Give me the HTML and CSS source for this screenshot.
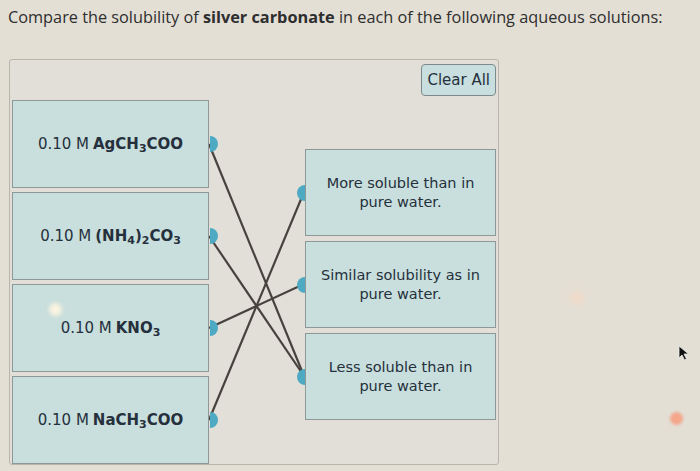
FILE: index.html
```html
<!DOCTYPE html>
<html lang="en">
<head>
    <meta charset="UTF-8">
    <title>Silver Carbonate Solubility</title>
    <link rel="stylesheet" href="styles.css">
</head>
<body>
    <p class="prompt">Compare the solubility of <strong>silver carbonate</strong> in each of the following aqueous solutions:</p>

    <div class="panel">
        <!-- connector lines between matched items -->
        <svg class="links" width="490" height="406">
            <line x1="199" y1="84" x2="294" y2="316"></line>
            <line x1="199" y1="176" x2="294" y2="316"></line>
            <line x1="199" y1="268" x2="294" y2="224"></line>
            <line x1="199" y1="360" x2="294" y2="132"></line>
        </svg>

        <div class="toolbar">
            <button class="clear-btn">Clear All</button>
        </div>

        <div class="board">
            <div class="column sources">
                <div class="item">0.10 M <b>AgCH<sub>3</sub>COO</b></div>
                <div class="item">0.10 M <b>(NH<sub>4</sub>)<sub>2</sub>CO<sub>3</sub></b></div>
                <div class="item">0.10 M <b>KNO<sub>3</sub></b></div>
                <div class="item">0.10 M <b>NaCH<sub>3</sub>COO</b></div>
            </div>
            <div class="column targets">
                <div class="item">More soluble than in<br>pure water.</div>
                <div class="item">Similar solubility as in<br>pure water.</div>
                <div class="item">Less soluble than in<br>pure water.</div>
            </div>
        </div>
    </div>

    <!-- pointer and glare marks on the screen -->
    <svg class="cursor" width="12" height="16" viewBox="0 0 12 16">
        <path d="M1 1 L1 13 L4 10 L6.5 15 L8.5 14 L6 9 L10.5 9 Z" fill="#111" stroke="#eee" stroke-width="0.8"></path>
    </svg>
    <span class="spot spot-orange"></span>
    <span class="spot spot-pale"></span>
    <span class="spot spot-glare"></span>
</body>
</html>
```

FILE: styles.css
```css
/* Page */
body {
    margin: 0;
    background-color: #e3dfd5;
    font-family: "DejaVu Sans", Verdana, sans-serif;
    color: #26303c;
    position: relative;
    height: 471px;
    overflow: hidden;
}

.prompt {
    margin: 0;
    padding: 6px 0 0 8px;
    height: 53px;
    box-sizing: border-box;
    font-family: "Open Sans", sans-serif;
    font-size: 16.3px;
    color: #2e2e2e;
}

/* Matching panel */
.panel {
    position: relative;
    margin-left: 9px;
    margin-top: 6px;
    width: 490px;
    height: 406px;
    box-sizing: border-box;
    border: 1px solid #b8b5ad;
    border-radius: 3px;
    background-color: #e2dfd8;
    padding: 4px 2px 0 2px;
}

.links {
    position: absolute;
    left: 0;
    top: 0;
    pointer-events: none;
}

.links line {
    stroke: #48423f;
    stroke-width: 2.2;
}

.toolbar {
    display: flex;
    justify-content: flex-end;
    height: 36px;
}

.clear-btn {
    height: 32px;
    padding: 0 5px;
    font-family: "DejaVu Sans", Verdana, sans-serif;
    font-size: 15px;
    color: #26303c;
    background-color: #c9dfdf;
    border: 1px solid #7d8a8c;
    border-radius: 4px;
}

.board {
    display: flex;
    justify-content: space-between;
}

.column {
    display: flex;
    flex-direction: column;
}

.sources {
    width: 197px;
    gap: 4px;
}

.targets {
    width: 191px;
    margin-top: 49px;
    gap: 5px;
}

.item {
    position: relative;
    z-index: 1;
    height: 87px;
    box-sizing: border-box;
    display: flex;
    align-items: center;
    justify-content: center;
    text-align: center;
    background-color: #c8dfdd;
    border: 1.5px solid #8e9898;
    font-size: 14.5px;
    line-height: 19px;
}

.sources .item {
    height: 88px;
    font-size: 15px;
}

.item b {
    font-weight: bold;
    margin-left: 4px;
}

.item sub {
    font-size: 11px;
    vertical-align: -3px;
    line-height: 0;
}

/* half-circle handles on the card edges */
.item::after {
    content: "";
    position: absolute;
    top: 50%;
    width: 8px;
    height: 16px;
    margin-top: -8px;
    background-color: #4ea9c2;
}

.sources .item::after {
    right: -9.5px;
    border-radius: 0 8px 8px 0;
}

.targets .item::after {
    left: -9.5px;
    border-radius: 8px 0 0 8px;
}

.cursor {
    position: absolute;
    left: 678px;
    top: 345px;
}

.spot {
    position: absolute;
    border-radius: 50%;
}

.spot-orange {
    left: 670px;
    top: 412px;
    width: 13px;
    height: 13px;
    background-color: #f4a58a;
    filter: blur(1.5px);
}

.spot-pale {
    left: 570px;
    top: 291px;
    width: 14px;
    height: 14px;
    background-color: #f1d9c8;
    filter: blur(3px);
}

.spot-glare {
    left: 49px;
    top: 303px;
    width: 13px;
    height: 13px;
    background-color: #fbf3e0;
    filter: blur(2px);
    z-index: 2;
}
```
